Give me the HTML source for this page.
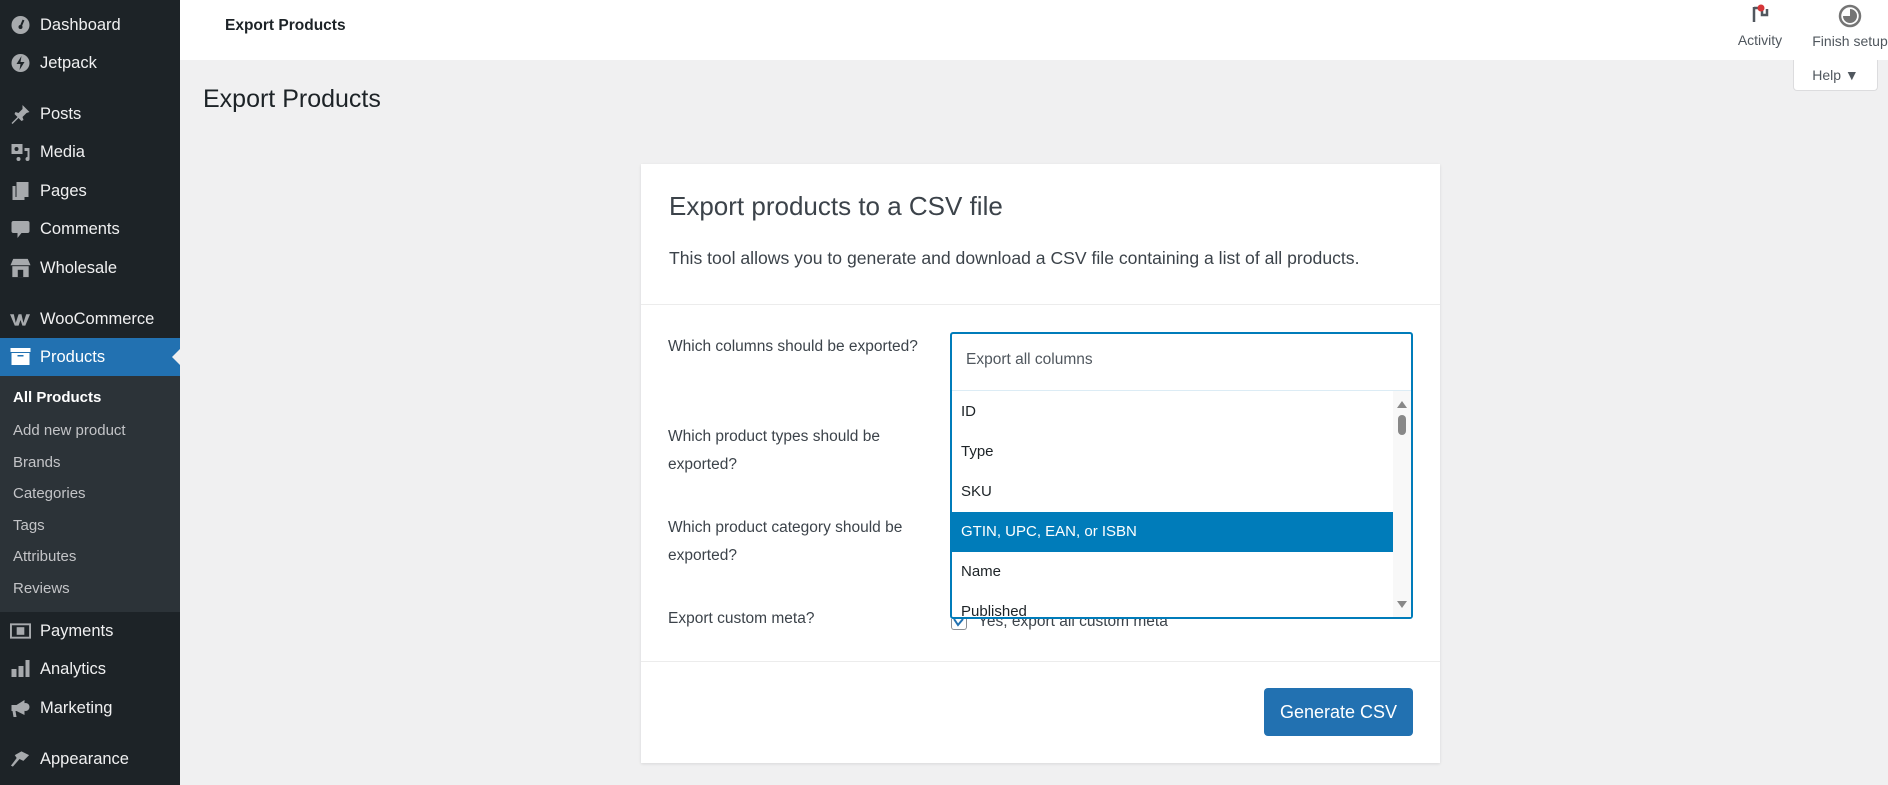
<!DOCTYPE html>
<html><head><meta charset="utf-8"><style>
*{box-sizing:border-box;margin:0;padding:0}
body{width:1888px;height:785px;overflow:hidden;background:#f0f0f1;font-family:"Liberation Sans",sans-serif;position:relative}
#side{position:absolute;left:0;top:0;width:180px;height:785px;background:#1d2327}
.mi{position:absolute;left:0;width:180px;height:38px;color:#f0f0f1;font-size:16.5px;line-height:38px;padding-left:40px}
.ic{position:absolute;left:10px;top:9px;width:21px;height:20px}
#sub{position:absolute;left:0;top:376px;width:180px;height:236px;background:#2c3338}
.si{position:absolute;left:13px;color:#c3c4c7;font-size:15px}
#top{position:absolute;left:180px;top:0;width:1708px;height:60px;background:#fff}
.lab{position:absolute;left:668px;color:#3c434a;font-size:15.5px;line-height:28px}
.opt{position:absolute;left:952px;width:441px;height:40px;line-height:40px;padding-left:9px;font-size:15px;color:#1d2327}
</style></head><body>
<div id="side">
<div class="mi" style="top:6px"><svg class="ic" viewBox="0 0 20 20"><circle cx="10" cy="10" r="9" fill="#a7aaad"/><circle cx="10" cy="12" r="2" fill="#1d2327"/><path d="M10 12L13 5" stroke="#1d2327" stroke-width="2"/></svg>Dashboard</div>
<div class="mi" style="top:44px"><svg class="ic" viewBox="0 0 20 20"><circle cx="10" cy="10" r="9" fill="#a7aaad"/><path d="M11 3L6 11h4l-1 6 5-8h-4z" fill="#1d2327"/></svg>Jetpack</div>
<div class="mi" style="top:95px"><svg class="ic" viewBox="0 0 20 20"><path d="M12 1l7 7-3 1-4 4 1 3-2 1-3-3-6 6-1-1 6-6-3-3 1-2 3 1 4-4z" fill="#a7aaad"/></svg>Posts</div>
<div class="mi" style="top:133px"><svg class="ic" viewBox="0 0 20 20"><rect x="1" y="2" width="11" height="10" fill="#a7aaad"/><circle cx="6" cy="7" r="2" fill="#1d2327"/><path d="M14 6h5v11a2 2 0 1 1-2-2V9h-3z" fill="#a7aaad"/><circle cx="8" cy="17" r="2" fill="#a7aaad"/></svg>Media</div>
<div class="mi" style="top:172px"><svg class="ic" viewBox="0 0 20 20"><rect x="6" y="1" width="12" height="15" fill="#a7aaad"/><rect x="2" y="5" width="3" height="14" fill="#a7aaad"/><rect x="2" y="16" width="12" height="3" fill="#a7aaad"/></svg>Pages</div>
<div class="mi" style="top:210px"><svg class="ic" viewBox="0 0 20 20"><path d="M3 2h14a2 2 0 0 1 2 2v8a2 2 0 0 1-2 2h-6l-4 5v-5H3a2 2 0 0 1-2-2V4a2 2 0 0 1 2-2z" fill="#a7aaad"/></svg>Comments</div>
<div class="mi" style="top:249px"><svg class="ic" viewBox="0 0 22 22"><path d="M3 1h16l3 7H0z" fill="#a7aaad"/><rect x="2" y="9" width="18" height="12" fill="#a7aaad"/><rect x="8" y="13" width="6" height="8" fill="#1d2327"/></svg>Wholesale</div>
<div class="mi" style="top:300px"><svg class="ic" viewBox="0 0 22 20"><path d="M0 5h4l2 9 3-9h3l2 9 3-9h4l-5 12h-3l-2-6-2 6H5z" fill="#a7aaad"/></svg>WooCommerce</div>
<div class="mi" style="top:338px;background:#2271b1;color:#fff"><svg class="ic" viewBox="0 0 20 20"><rect x="0" y="1" width="20" height="4" fill="#fff"/><rect x="1" y="6" width="18" height="12" fill="#fff"/><rect x="7" y="8" width="6" height="1.5" fill="#2271b1"/></svg>Products<span style="position:absolute;right:0;top:11px;border:8px solid transparent;border-right-color:#f0f0f1"></span></div>
<div id="sub">
<div class="si" style="top:13px;color:#fff;font-weight:bold">All Products</div>
<div class="si" style="top:46px">Add new product</div>
<div class="si" style="top:78px">Brands</div>
<div class="si" style="top:109px">Categories</div>
<div class="si" style="top:141px">Tags</div>
<div class="si" style="top:172px">Attributes</div>
<div class="si" style="top:204px">Reviews</div>
</div>
<div class="mi" style="top:612px"><svg class="ic" viewBox="0 0 22 20"><rect x="1" y="3" width="20" height="14" fill="none" stroke="#a7aaad" stroke-width="2"/><rect x="7" y="6" width="8" height="8" fill="#a7aaad"/></svg>Payments</div>
<div class="mi" style="top:650px"><svg class="ic" viewBox="0 0 20 20"><rect x="1" y="10" width="5" height="8" fill="#a7aaad"/><rect x="8" y="7" width="5" height="11" fill="#a7aaad"/><rect x="15" y="1" width="4" height="17" fill="#a7aaad"/></svg>Analytics</div>
<div class="mi" style="top:689px"><svg class="ic" viewBox="0 0 20 20"><path d="M1 7h5l8-5v15l-8-4H5l1 6H3l-1-6H1z" fill="#a7aaad"/><circle cx="15" cy="9" r="4" fill="#a7aaad"/></svg>Marketing</div>
<div class="mi" style="top:740px"><svg class="ic" viewBox="0 0 22 20"><path d="M12 2l8 4-6 6-4-2-7 8-2-1 6-8-2-3z" fill="#a7aaad"/></svg>Appearance</div>
</div>
<div id="top">
<div style="position:absolute;left:45px;top:17px;font-size:15.5px;font-weight:bold;color:#1d2327">Export Products</div>
<div style="position:absolute;left:1557px;top:3px;width:46px;text-align:center">
<svg width="22" height="22" viewBox="0 0 22 22"><path d="M5 4v15M5 5h8v7h5V6" stroke="#50575e" stroke-width="2.5" fill="none"/><circle cx="12" cy="5" r="3.5" fill="#d63638"/></svg>
<div style="font-size:14px;color:#50575e;margin-top:2px">Activity</div></div>
<div style="position:absolute;left:1630px;top:4px;width:80px;text-align:center">
<svg width="24" height="24" viewBox="0 0 24 24"><circle cx="12" cy="12" r="10" fill="none" stroke="#757575" stroke-width="2.5"/><path d="M12 5a7 7 0 1 1-7 7h7z" fill="#757575"/></svg>
<div style="font-size:14px;color:#50575e;margin-top:0px">Finish setup</div></div>
</div>
<div style="position:absolute;left:1793px;top:60px;width:85px;height:31px;background:#fff;border:1px solid #dcdcde;border-top:0;border-radius:0 0 4px 4px;font-size:14px;color:#50575e;line-height:30px;text-align:center">Help &#9660;</div>
<div style="position:absolute;left:203px;top:85px;font-size:25px;color:#1d2327">Export Products</div>
<div style="position:absolute;left:641px;top:164px;width:799px;height:599px;background:#fff;box-shadow:0 1px 3px rgba(0,0,0,.1)">
<div style="position:absolute;left:28px;top:27px;font-size:26px;color:#3c434a">Export products to a CSV file</div>
<div style="position:absolute;left:28px;top:84px;font-size:17.6px;color:#3c434a">This tool allows you to generate and download a CSV file containing a list of all products.</div>
<div style="position:absolute;left:0;top:140px;width:799px;height:1px;background:#ececec"></div>
<div style="position:absolute;left:0;top:497px;width:799px;height:1px;background:#ececec"></div>
<div style="position:absolute;left:623px;top:524px;width:149px;height:48px;background:#2271b1;border-radius:4px;color:#fff;font-size:18px;line-height:48px;text-align:center">Generate CSV</div>
</div>
<div class="lab" style="top:333px">Which columns should be exported?</div>
<div class="lab" style="top:423px">Which product types should be<br>exported?</div>
<div class="lab" style="top:514px">Which product category should be<br>exported?</div>
<div class="lab" style="top:605px">Export custom meta?</div>
<div style="position:absolute;left:950px;top:332px;width:463px;height:287px;background:#fff;border:2px solid #007cba;border-radius:3px"></div>
<div style="position:absolute;left:966px;top:351px;font-size:15.5px;color:#50575e">Export all columns</div>
<div style="position:absolute;left:952px;top:390px;width:459px;height:1px;background:#dcecf5"></div>
<div style="position:absolute;left:952px;top:391px;width:459px;height:226px;overflow:hidden">
<div class="opt" style="position:absolute;left:0;top:1px">ID</div>
<div class="opt" style="position:absolute;left:0;top:41px">Type</div>
<div class="opt" style="position:absolute;left:0;top:81px">SKU</div>
<div class="opt" style="position:absolute;left:0;top:121px;background:#007cba;color:#fff">GTIN, UPC, EAN, or ISBN</div>
<div class="opt" style="position:absolute;left:0;top:161px">Name</div>
<div class="opt" style="position:absolute;left:0;top:201px">Published</div>
<div style="position:absolute;left:441px;top:0;width:18px;height:226px;background:#f8f8f8">
<div style="position:absolute;left:4px;top:10px;border:5px solid transparent;border-bottom:7px solid #888;border-top:0"></div>
<div style="position:absolute;left:5px;top:24px;width:8px;height:20px;background:#888;border-radius:4px"></div>
<div style="position:absolute;left:4px;top:210px;border:5px solid transparent;border-top:7px solid #888;border-bottom:0"></div>
</div></div>
<div style="position:absolute;left:978px;top:619px;font-size:15.5px;color:#3c434a;height:11px;overflow:hidden;line-height:6px">Yes, export all custom meta</div>
<div style="position:absolute;left:951px;top:619px;width:16px;height:11px;border:1px solid #8c8f94;border-top:0;border-radius:0 0 3px 3px"></div>
<svg style="position:absolute;left:953px;top:619px" width="12" height="8" viewBox="0 0 12 8"><path d="M1 0l4 6 5-6" stroke="#2271b1" stroke-width="2" fill="none"/></svg>
</body></html>
